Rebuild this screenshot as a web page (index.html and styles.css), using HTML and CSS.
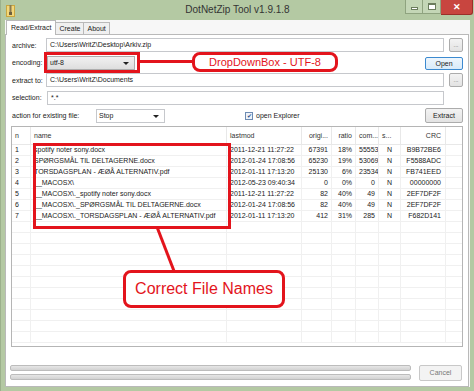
FILE: index.html
```html
<!DOCTYPE html>
<html lang="en">
<head>
    <meta charset="UTF-8">
    <meta name="viewport" content="width=device-width, initial-scale=1.0">
    <title>DotNetZip Tool v1.9.1.8</title>
    <link rel="stylesheet" href="styles.css">
</head>
<body>
    <div class="window">
        <div class="titlebar">
            <svg class="app-icon" width="9" height="13" viewBox="0 0 9 13">
                <rect x="0.5" y="1.5" width="8" height="11" fill="#f3d77a" stroke="#c9a640"/>
                <rect x="3.5" y="1" width="2" height="9" fill="#8a7a50"/>
                <rect x="3" y="8" width="3" height="3" fill="#6d6040"/>
            </svg>
            <div class="title">DotNetZip Tool v1.9.1.8</div>
            <div class="caption">
                <div class="cap-btn"><span class="cap-min"></span></div>
                <div class="cap-btn"><span class="cap-max"></span></div>
                <div class="cap-btn cap-close">&#x2715;</div>
            </div>
        </div>

        <div class="client">
            <div class="tabs">
                <div class="tab active">Read/Extract</div>
                <div class="tab">Create</div>
                <div class="tab">About</div>
            </div>

            <div class="page">
                <div class="row h14">
                    <span class="lbl">archive:</span>
                    <div class="textbox">C:\Users\WritZ\Desktop\Arkiv.zip</div>
                    <div class="btn dots">...</div>
                </div>
                <div class="row h15">
                    <span class="lbl">encoding:</span>
                    <div class="combo combo-list">utf-8<span class="arrow"></span></div>
                    <div class="btn btn-default open">Open</div>
                </div>
                <div class="row h14">
                    <span class="lbl">extract to:</span>
                    <div class="textbox">C:\Users\WritZ\Documents</div>
                    <div class="btn dots">...</div>
                </div>
                <div class="row h15">
                    <span class="lbl">selection:</span>
                    <div class="textbox sel">*.*</div>
                </div>
                <div class="row h15">
                    <span class="lbl lbl-wide">action for existing file:</span>
                    <div class="combo combo-stop">Stop<span class="arrow"></span></div>
                    <div class="check"><span class="box">&#x2714;</span>open Explorer</div>
                    <div class="btn extract">Extract</div>
                </div>

                <div class="listview">
                    <div class="lv-row lv-head">
                        <div>n</div><div>name</div><div>lastmod</div>
                        <div class="num">origi...</div><div class="num">ratio</div>
                        <div class="num">com...</div><div>s...</div>
                        <div class="num crc">CRC</div><div></div>
                    </div>
                    <div id="rows"></div>
                </div>

                <div class="bottom">
                    <div class="bars">
                        <div class="bar"></div>
                        <div class="bar"></div>
                    </div>
                    <div class="btn cancel">Cancel</div>
                </div>
            </div>
        </div>

        <!-- annotation overlay -->
        <div class="mark mark-enc"></div>
        <div class="mark mark-names"></div>
        <svg class="lines" width="474" height="391">
            <line x1="138" y1="61.5" x2="192" y2="61.5" stroke="#e3141c" stroke-width="3"/>
            <line x1="156" y1="227" x2="173" y2="271" stroke="#e3141c" stroke-width="3"/>
        </svg>
        <div class="callout callout-enc">DropDownBox - UTF-8</div>
        <div class="callout callout-names">Correct File Names</div>
    </div>

    <script>
        const files = [
            ["1", "spotify noter sony.docx", "2011-12-21 11:27:22", "67391", "18%", "55553", "N", "B9B72BE6"],
            ["2", "SPØRGSMÅL TIL DELTAGERNE.docx", "2012-01-24 17:08:56", "65230", "19%", "53069", "N", "F5588ADC"],
            ["3", "TORSDAGSPLAN - ÆØÅ ALTERNATIV.pdf", "2012-01-11 17:13:20", "25130", "6%", "23534", "N", "FB741EED"],
            ["4", "__MACOSX\\", "2012-05-23 09:40:34", "0", "0%", "0", "N", "00000000"],
            ["5", "__MACOSX\\._spotify noter sony.docx", "2011-12-21 11:27:22", "82", "40%", "49", "N", "2EF7DF2F"],
            ["6", "__MACOSX\\._SPØRGSMÅL TIL DELTAGERNE.docx", "2012-01-24 17:08:56", "82", "40%", "49", "N", "2EF7DF2F"],
            ["7", "__MACOSX\\._TORSDAGSPLAN - ÆØÅ ALTERNATIV.pdf", "2012-01-11 17:13:20", "412", "31%", "285", "N", "F682D141"]
        ];
        const numCols = [3, 4, 5, 7];

        function buildRows() {
            const holder = document.getElementById('rows');
            for (let i = 0; i < 18; i++) {
                const row = document.createElement('div');
                row.className = 'lv-row';
                const data = files[i] || ['', '', '', '', '', '', '', ''];
                data.concat(['']).forEach((text, idx) => {
                    const cell = document.createElement('div');
                    if (numCols.includes(idx)) cell.className = 'num';
                    if (idx === 6) cell.className = 'mid';
                    if (idx === 7) cell.className = 'num crc';
                    cell.textContent = text;
                    row.appendChild(cell);
                });
                holder.appendChild(row);
            }
        }

        buildRows();
    </script>
</body>
</html>
```

FILE: styles.css
```css
* {
    box-sizing: border-box;
}

body {
    margin: 0;
    font-family: "Liberation Sans", Arial, sans-serif;
    font-size: 7px;
    color: #1a1a1a;
    background: #b4c9a3;
}

.window {
    position: relative;
    width: 474px;
    height: 391px;
    background: #b4c9a3;
    display: flex;
    flex-direction: column;
    overflow: hidden;
    border-left: 1px solid #9cb08c;
}

/* title bar */
.titlebar {
    position: relative;
    height: 20px;
    flex: none;
}

.app-icon {
    position: absolute;
    left: 5px;
    top: 4px;
}

.title {
    text-align: center;
    font-size: 10px;
    line-height: 20px;
    color: #333;
}

.caption {
    position: absolute;
    right: 1px;
    top: 0;
    display: flex;
}

.cap-btn {
    width: 18px;
    height: 14px;
    border: 1px solid #8fa37f;
    border-top: none;
    background: #c4d6b6;
    display: flex;
    align-items: center;
    justify-content: center;
}

.cap-btn + .cap-btn {
    border-left: none;
}

.cap-min {
    width: 7px;
    height: 3px;
    margin-top: 4px;
    background: #fff;
    border: 1px solid #6b7d5d;
}

.cap-max {
    width: 8px;
    height: 7px;
    border: 1px solid #6b7d5d;
    border-top-width: 2px;
    background: #fff;
}

.cap-close {
    width: 32px;
    height: 15px;
    background: #c8453f;
    border-color: #9a2f2a;
    color: #fff;
    font-size: 9px;
    font-weight: bold;
    border-radius: 0 0 3px 0;
}

/* client area */
.client {
    flex: 1;
    margin: 0 4px 4px 4px;
    background: #f7f7f7;
    display: flex;
    flex-direction: column;
}

.tabs {
    height: 14px;
    display: flex;
    align-items: flex-end;
    padding-left: 1px;
}

.tab {
    height: 12px;
    padding: 0 3px;
    border: 1px solid #b9b9b9;
    border-bottom: none;
    background: #f0f0f0;
    line-height: 11px;
    font-size: 7px;
}

.tab.active {
    height: 15px;
    padding: 0 4px;
    margin-bottom: -1px;
    background: #fff;
    line-height: 13px;
    position: relative;
    z-index: 1;
}

.tab + .tab {
    border-left: none;
}

.page {
    flex: 1;
    margin-right: 1px;
    border: 1px solid #b9b9b9;
    background: #fff;
    padding: 3px 5px 0 6px;
    display: flex;
    flex-direction: column;
    gap: 3px;
}

.row {
    display: flex;
    align-items: center;
}

.h14 {
    height: 14px;
}

.h15 {
    height: 15px;
}

.lbl {
    width: 34px;
    flex: none;
    color: #222;
}

.lbl-wide {
    width: 71px;
}

.textbox {
    width: 398px;
    height: 14px;
    border: 1px solid #c6c8cc;
    padding-left: 3px;
    line-height: 12px;
    background: #fff;
}

.textbox.sel {
    margin-left: 1px;
    width: 397px;
}

.btn {
    height: 14px;
    border: 1px solid #acacac;
    border-radius: 2px;
    background: linear-gradient(#f3f3f3, #e3e3e3);
    text-align: center;
    line-height: 12px;
    color: #222;
}

.dots {
    width: 14px;
    margin-left: auto;
    font-size: 6px;
    color: #666;
}

.open {
    width: 38px;
    height: 13px;
    margin-left: auto;
    margin-top: 2px;
    line-height: 11px;
}

.btn-default {
    border-color: #3c8ad0;
    background: linear-gradient(#eef6fd, #d9ebfa);
}

.extract {
    width: 38px;
    height: 15px;
    margin-left: auto;
    line-height: 13px;
}

.combo {
    position: relative;
    height: 14px;
    border: 1px solid #adadad;
    padding-left: 2px;
    line-height: 12px;
}

.combo-list {
    width: 88px;
    margin-left: 1px;
    background: linear-gradient(#f1f1f1, #dedede);
}

.combo-stop {
    width: 69px;
    margin-left: 13px;
    background: #fff;
    border-color: #c6c8cc;
}

.arrow {
    position: absolute;
    right: 5px;
    top: 5px;
    border-left: 3px solid transparent;
    border-right: 3px solid transparent;
    border-top: 3px solid #222;
}

.check {
    display: flex;
    align-items: center;
    gap: 3px;
    margin-left: 80px;
}

.box {
    width: 8px;
    height: 8px;
    border: 1px solid #6e8bb2;
    background: #eef3fa;
    font-size: 6px;
    line-height: 6px;
    text-align: center;
    color: #2d4f86;
}

/* list view */
.listview {
    height: 221px;
    margin-left: -1px;
    width: 452px;
    border: 1px solid #b5b5b5;
    overflow: hidden;
    flex: none;
}

.lv-row {
    display: grid;
    grid-template-columns: 19px 196px 75px 30px 24px 23px 22px 45px 1fr;
    height: 11px;
    border-bottom: 1px solid #f0f0f0;
    line-height: 10px;
}

.lv-row > div {
    border-right: 1px solid #f0f0f0;
    padding: 0 3px;
    white-space: nowrap;
    overflow: hidden;
}

.lv-row > div:last-child {
    border-right: none;
}

.lv-head {
    height: 18px;
    line-height: 17px;
    border-bottom: 1px solid #e8e8e8;
    color: #333;
}

.lv-head > div {
    border-right-color: #e8e8e8;
}

.num {
    text-align: right;
}

.mid {
    text-align: center;
}

.crc {
    padding-right: 4px !important;
}

/* bottom bar */
.bottom {
    display: flex;
    align-items: flex-start;
    margin-top: 15px;
    margin-left: -2px;
}

.bars {
    width: 401px;
    display: flex;
    flex-direction: column;
    gap: 3px;
}

.bar {
    height: 6px;
    border: 1px solid #bcbcbc;
    border-radius: 2px;
    background: linear-gradient(#e6e6e6, #d2d2d2);
}

.cancel {
    width: 43px;
    height: 16px;
    margin-left: 8px;
    line-height: 14px;
    color: #777;
    border-color: #c8c8c8;
    background: #f3f3f3;
}

/* annotations */
.mark {
    position: absolute;
    border: 3px solid #e3141c;
}

.mark-enc {
    left: 43px;
    top: 52px;
    width: 96px;
    height: 21px;
}

.mark-names {
    left: 32px;
    top: 143px;
    width: 198px;
    height: 86px;
}

.lines {
    position: absolute;
    left: 0;
    top: 0;
}

.callout {
    position: absolute;
    border: 3px solid #e3141c;
    border-radius: 8px;
    background: #fff;
    color: #e3141c;
    display: flex;
    align-items: center;
    justify-content: center;
}

.callout-enc {
    left: 191px;
    top: 52px;
    width: 146px;
    height: 20px;
    font-size: 11px;
}

.callout-names {
    left: 122px;
    top: 270px;
    width: 162px;
    height: 38px;
    font-size: 16px;
}
```
